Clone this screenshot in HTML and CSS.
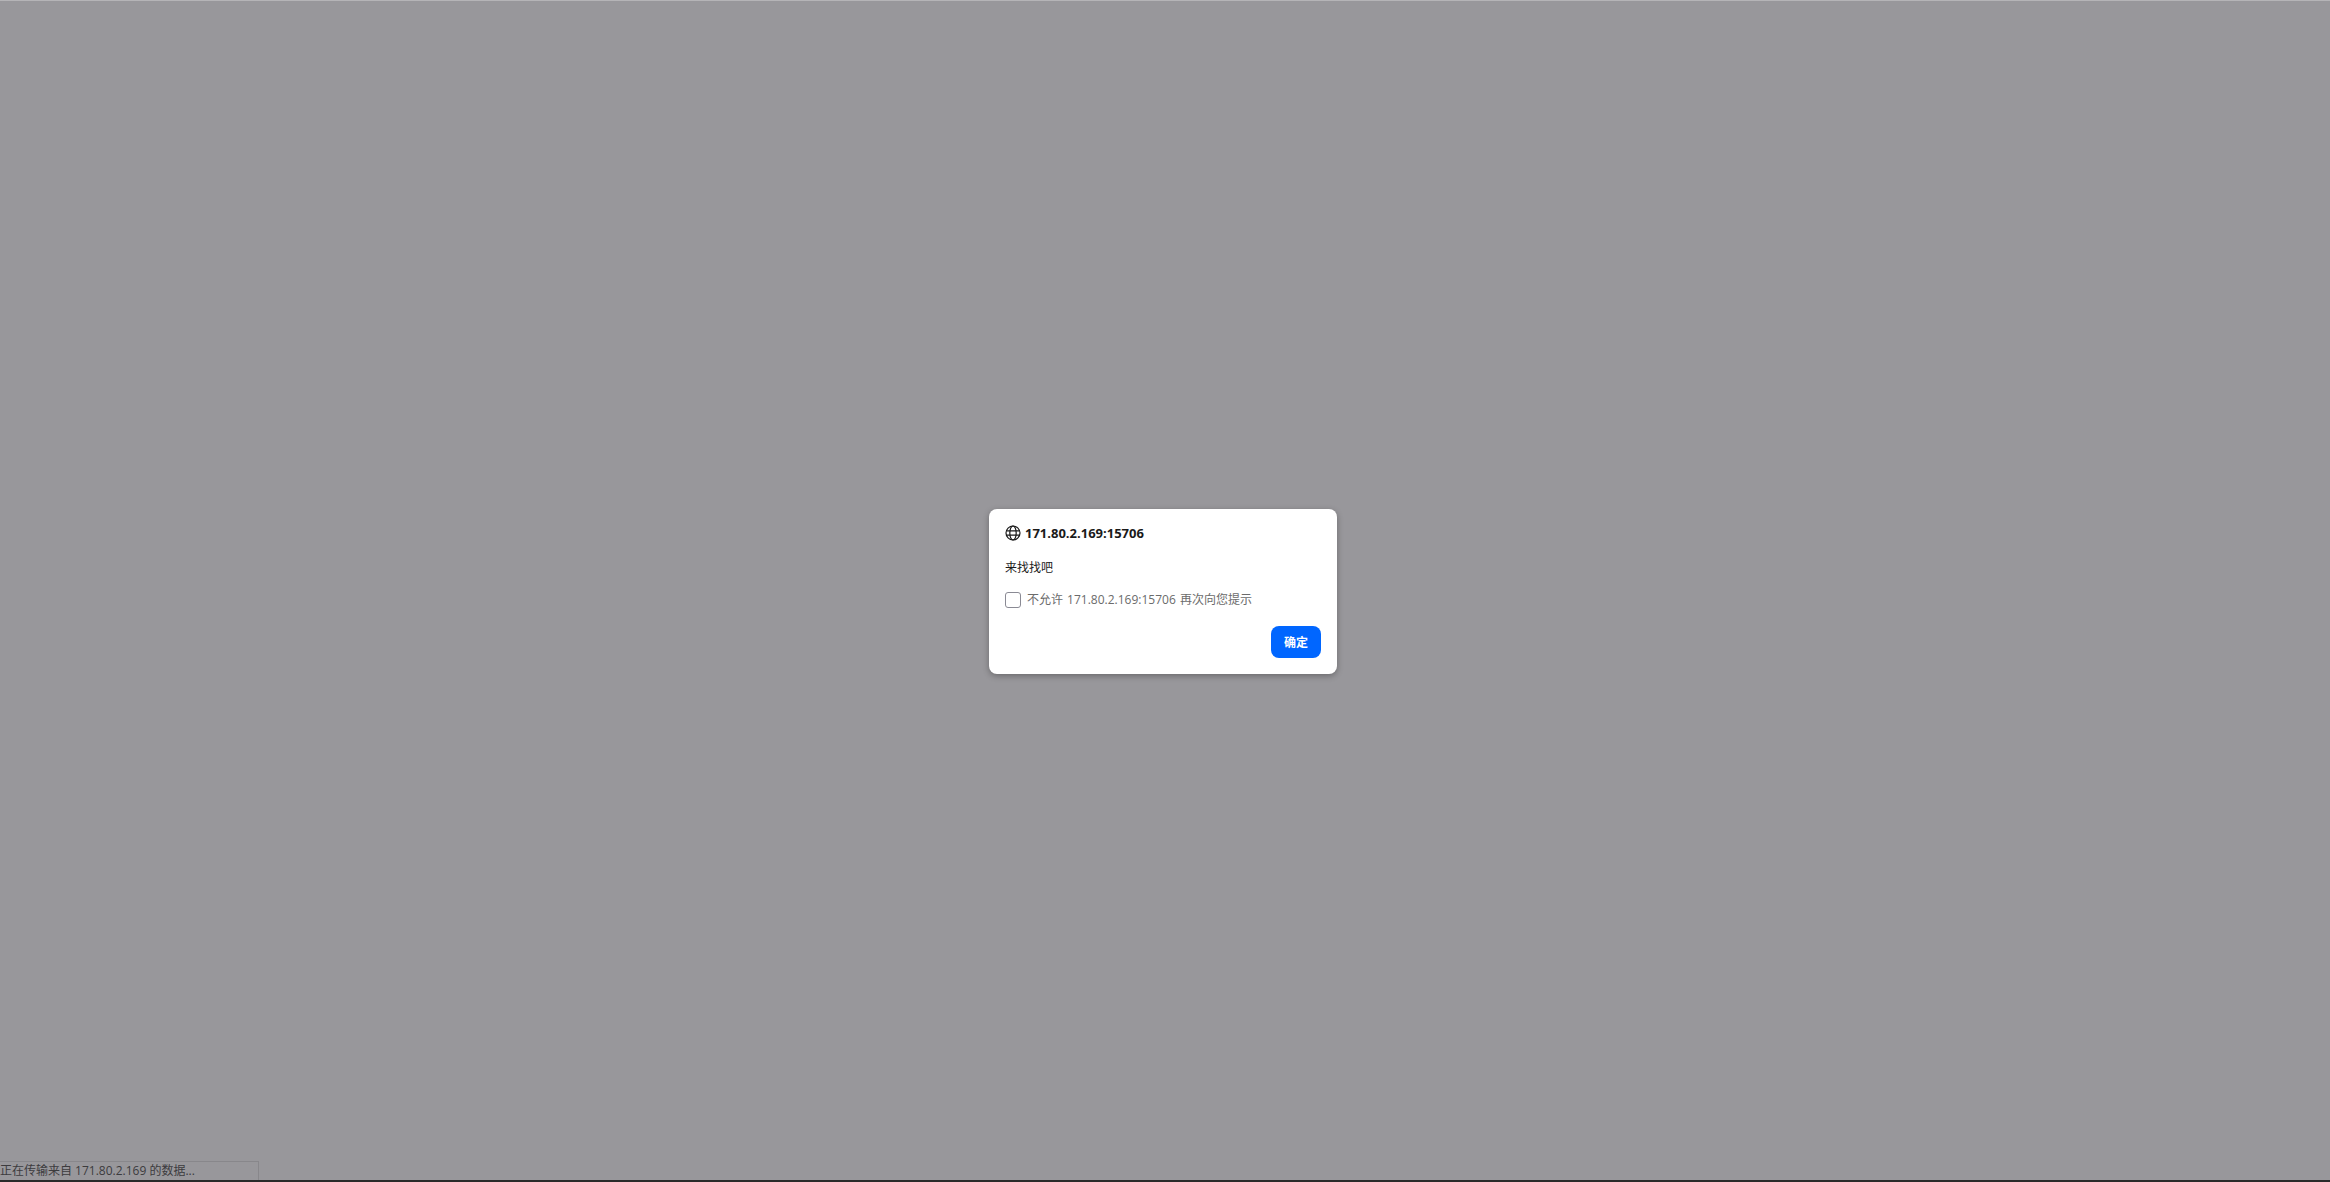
FILE: index.html
```html
<!doctype html>
<html lang="en">

<head>
    <meta charset="UTF-8">
    <title>来找找吧</title>
    <link rel="stylesheet" href="styles.css">
</head>

<body>
    <div class="page">
        <div class="overlay">
            <div class="dialog">
                <div class="dialog-title">
                    <svg class="globe" viewBox="0 0 16 16" fill="none" stroke="#1a1a1a" stroke-width="1.2">
                        <circle cx="8" cy="8" r="7"/>
                        <ellipse cx="8" cy="8" rx="3.2" ry="7"/>
                        <path d="M1.2 5.9h13.6M1.2 10.1h13.6"/>
                    </svg>
                    <span>171.80.2.169:15706</span>
                </div>
                <div class="dialog-msg">来找找吧</div>
                <label class="dialog-check">
                    <span class="check-box"></span>
                    <span>不允许 171.80.2.169:15706 再次向您提示</span>
                </label>
                <div class="dialog-foot">
                    <button class="ok-btn">确定</button>
                </div>
            </div>
        </div>
        <div class="status">
            <div class="status-text">正在传输来自 171.80.2.169 的数据...</div>
        </div>
    </div>
</body>

</html>
```

FILE: styles.css
```css
* {
    margin: 0;
    padding: 0;
    box-sizing: border-box;
}

html,
body {
    height: 100%;
}

body {
    font-family: "Open Sans", "Noto Sans CJK SC", sans-serif;
    background-color: #98979b;
    overflow: hidden;
}

.page {
    height: 100%;
    display: flex;
    flex-direction: column;
    border-top: 1px solid #b5b4b7;
    border-bottom: 2px solid #2a2a2a;
}

/* dialog sits a little left of centre, same as the browser draws it */
.overlay {
    flex: 1;
    display: flex;
    justify-content: center;
    padding-top: 508px;
    padding-right: 4px;
}

.dialog {
    width: 348px;
    height: 165px;
    padding: 16px 16px 0;
    background-color: #fff;
    border-radius: 8px;
    box-shadow: 0 2px 6px rgba(0, 0, 0, .3);
}

.dialog-title {
    display: flex;
    align-items: center;
    gap: 4px;
    height: 16px;
    font-size: 13px;
    font-weight: 700;
    color: #1a1a1a;
}

.globe {
    width: 16px;
    height: 16px;
}

.dialog-msg {
    margin-top: 18px;
    font-size: 12px;
    line-height: 18px;
    color: #1a1a1a;
}

.dialog-check {
    display: flex;
    align-items: center;
    gap: 6px;
    margin-top: 15px;
    font-size: 12px;
    line-height: 16px;
    word-spacing: 1px;
    color: #6b6b6b;
}

.check-box {
    width: 16px;
    height: 16px;
    border: 1px solid #8a8a94;
    border-radius: 3px;
}

.dialog-foot {
    display: flex;
    justify-content: flex-end;
    margin-top: 18px;
}

.ok-btn {
    width: 50px;
    height: 32px;
    border: 0;
    border-radius: 8px;
    background-color: #0066ff;
    color: #fff;
    font-family: inherit;
    font-size: 12px;
    font-weight: 700;
}

.status {
    width: 259px;
    height: 19px;
    border: 1px solid #88878b;
    border-left: 0;
    border-bottom: 0;
}

.status-text {
    font-size: 12px;
    line-height: 18px;
    color: #3c3b3e;
    white-space: nowrap;
}
```
